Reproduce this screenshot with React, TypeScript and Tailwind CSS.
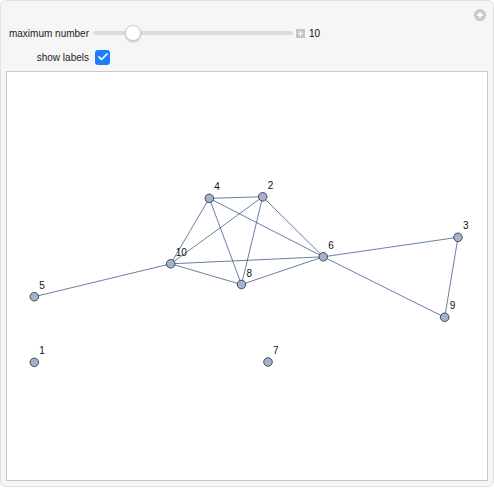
import { Check } from 'lucide-react'

const nodes: Record<number, [number, number]> = {
  1: [34.3, 362.3],
  2: [262.7, 196.8],
  3: [458, 237.3],
  4: [209.3, 198.3],
  5: [34.3, 296.7],
  6: [323.3, 256.8],
  7: [268, 362],
  8: [241.5, 284.5],
  9: [444.7, 317.3],
  10: [170.7, 263.8],
}

const edges: [number, number][] = [
  [4, 2],
  [4, 10],
  [4, 8],
  [4, 6],
  [2, 10],
  [2, 8],
  [2, 6],
  [10, 8],
  [10, 6],
  [8, 6],
  [10, 5],
  [6, 3],
  [6, 9],
  [3, 9],
]

function Graph() {
  return (
    <svg viewBox="7 72 480 408" className="block h-full w-full">
      {edges.map(([a, b]) => (
        <line
          key={`${a}-${b}`}
          x1={nodes[a][0]}
          y1={nodes[a][1]}
          x2={nodes[b][0]}
          y2={nodes[b][1]}
          stroke="rgb(38,74,128)"
          strokeOpacity={0.7}
          strokeWidth={1}
        />
      ))}
      {Object.entries(nodes).map(([id, [x, y]]) => (
        <g key={id}>
          <circle
            cx={x}
            cy={y}
            r={4.3}
            fill="#a3b3cc"
            stroke="rgba(0,0,0,0.7)"
            strokeWidth={0.9}
          />
          <text
            x={x + 5}
            y={y - 8}
            fontSize={10}
            fill="#111"
            style={{ fontFamily: '"Liberation Sans", Arial, sans-serif' }}
          >
            {id}
          </text>
        </g>
      ))}
    </svg>
  )
}

export default function App() {
  return (
    <div className="relative h-[487px] w-[494px] rounded-md border border-[#e2e2e2] bg-[#f6f6f6] px-[5px] font-['Liberation_Sans',Arial,sans-serif] text-[10px] text-[#222]">
      <div className="absolute right-[7px] top-[8px] flex h-[12px] w-[12px] items-center justify-center rounded-full bg-[#c9c9c9]">
        <div className="relative h-[6px] w-[6px]">
          <div className="absolute left-0 top-[2px] h-[2px] w-[6px] bg-white" />
          <div className="absolute left-[2px] top-0 h-[6px] w-[2px] bg-white" />
        </div>
      </div>

      <div className="flex flex-col gap-[6px] pt-[23px]">
        <div className="flex h-[18px] items-center">
          <span className="w-[83px] text-right">maximum number</span>
          <div className="relative ml-[4px] flex h-[18px] w-[200px] items-center">
            <div className="h-[4px] w-full rounded-full bg-[#dcdcdc]" />
            <div className="absolute left-[32px] top-[1px] h-[16px] w-[16px] rounded-full border border-[#d4d4d4] bg-white shadow-[0_1px_2px_rgba(0,0,0,0.25)]" />
          </div>
          <div className="ml-[3px] flex h-[9px] w-[9px] items-center justify-center bg-[#c6c6c6]">
            <div className="relative h-[5px] w-[5px]">
              <div className="absolute left-0 top-[2px] h-[1px] w-[5px] bg-white" />
              <div className="absolute left-[2px] top-0 h-[5px] w-[1px] bg-white" />
            </div>
          </div>
          <span className="ml-[4px] text-[#111]">10</span>
        </div>
        <div className="flex h-[18px] items-center">
          <span className="w-[83px] text-right">show labels</span>
          <div className="ml-[6px] flex h-[15px] w-[15px] items-center justify-center rounded-[3px] bg-[#1a7ffa]">
            <Check className="h-[12px] w-[12px] text-white" strokeWidth={3.5} />
          </div>
        </div>
      </div>

      <div className="mt-[5px] h-[410px] border border-[#c9c9c9] bg-white">
        <Graph />
      </div>
    </div>
  )
}
